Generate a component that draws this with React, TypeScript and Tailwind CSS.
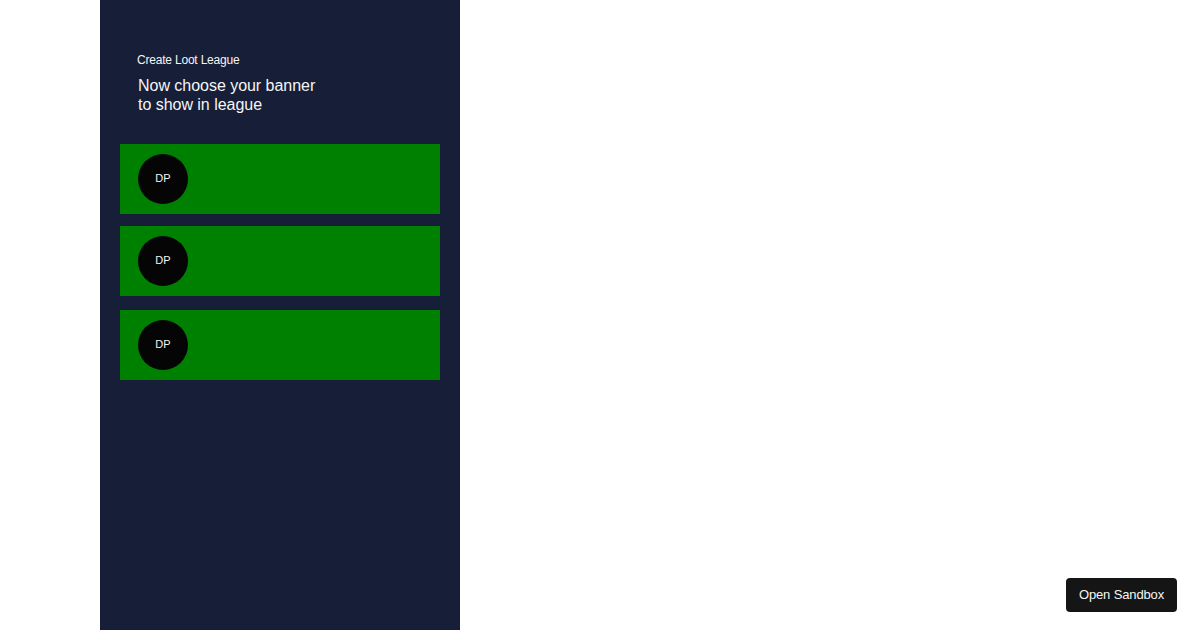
export default function App() {
  const rows = ["mb-3", "mb-3.5", ""];
  return (
    <div className="relative h-[630px] w-[1200px] overflow-hidden bg-white font-['Liberation_Sans',sans-serif]">
      <div className="ml-[100px] h-full w-[360px] bg-[#161e38] px-5 pt-[53px]">
        <div className="pl-[17px] text-xs leading-[15px] tracking-[-0.2px] text-[#f5f5f5]">Create Loot League</div>
        <div className="mt-[8px] pl-[18px] text-base leading-[19px] tracking-[-0.03px] text-[#f5f5f5]">
          Now choose your banner
          <br />
          to show in league
        </div>
        <div className="mt-[30px]">
          {rows.map((m, i) => (
            <div key={i} className={`flex h-[70px] items-center bg-[#008000] pl-[18px] ${m}`}>
              <div className="flex h-[50px] w-[50px] items-center justify-center rounded-full bg-[#050505] pb-0.5 text-[11px] text-[#f5f5f5]">
                DP
              </div>
            </div>
          ))}
        </div>
      </div>
      <button className="absolute left-[1066px] top-[578px] h-[34px] w-[111px] rounded bg-[#151515] text-[13px] tracking-[-0.13px] text-[#f5f5f5]">
        Open Sandbox
      </button>
    </div>
  );
}
